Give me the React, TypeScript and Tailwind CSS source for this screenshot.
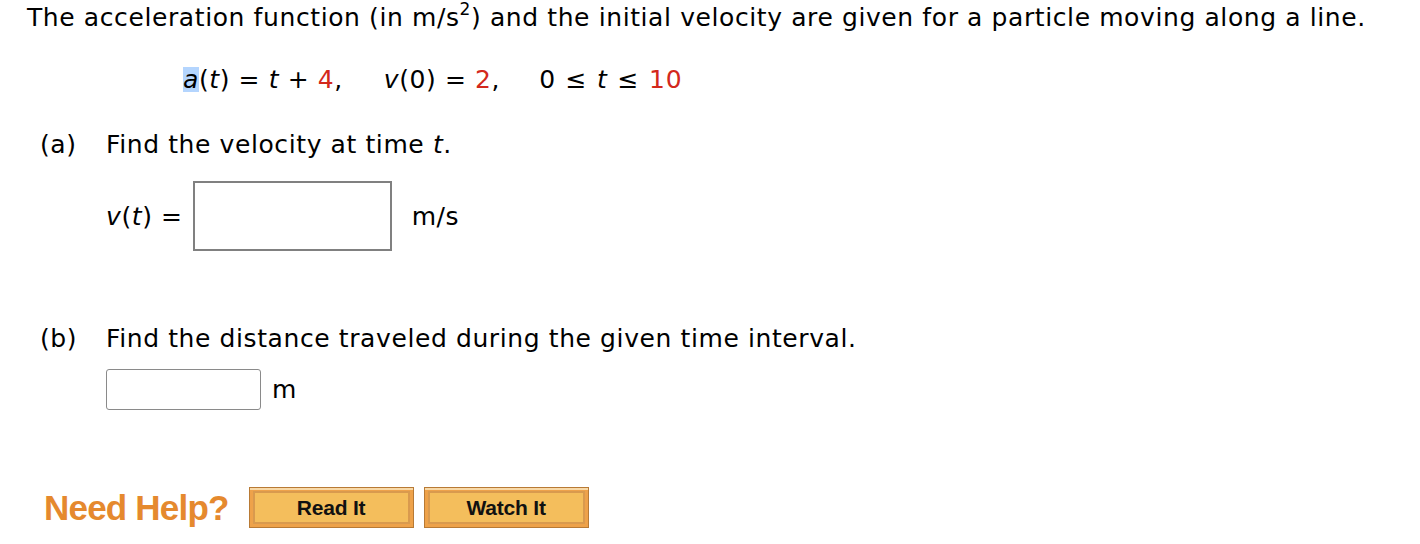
import React from 'react';

const font = { fontFamily: '"DejaVu Sans", Verdana, sans-serif' };

const HelpButton = ({ label }: { label: string }) => (
  <div className="w-[165px] h-[41px] border border-[#b87a35] bg-[#eea24a] p-[3px] shadow-[inset_0_2px_0_#f8d9a8]">
    <div className="h-full border-2 border-[#d99a4e] bg-[#f4be5c] flex items-center justify-center">
      <span className="text-[21px] font-bold text-[#111] tracking-[-0.2px] font-['Liberation_Sans',Arial,sans-serif]">
        {label}
      </span>
    </div>
  </div>
);

export default function App() {
  return (
    <div className="bg-white w-[1420px] h-[544px] text-black text-[25px] tracking-[0.6px] leading-none" style={font}>
      <div className="pl-[27px] pt-[5px]">
        The acceleration function (in m/s<sup className="text-[17px] relative top-[-11px]">2</sup>) and the initial velocity are given for a particle moving along a line.
      </div>

      <div className="pl-[183px] pt-[37px] flex items-baseline whitespace-pre">
        <span className="italic bg-[#b4d5fe]">a</span>
        <span>(</span><span className="italic">t</span><span>) = </span>
        <span className="italic">t</span><span> + </span>
        <span className="text-[#d3281c]">4</span><span>,</span>
        <span className="w-[41px]" />
        <span className="italic">v</span><span>(0) = </span>
        <span className="text-[#d3281c]">2</span><span>,</span>
        <span className="w-[39px]" />
        <span className="tracking-[1.3px]">0 ≤ </span><span className="italic tracking-[1.3px]">t</span><span className="tracking-[1.3px]"> ≤ </span>
        <span className="text-[#d3281c] tracking-[1px]">10</span>
      </div>

      <div className="pl-[40px] pt-[40px] flex">
        <span className="w-[66px]">(a)</span>
        <span>Find the velocity at time <span className="italic">t</span>.</span>
      </div>

      <div className="pl-[106px] pt-[24px] flex items-center">
        <span><span className="italic">v</span>(<span className="italic">t</span>) =</span>
        <div className="ml-[10px] w-[199px] h-[70px] border-2 border-[#808080] bg-white" />
        <span className="ml-[20px]">m/s</span>
      </div>

      <div className="pl-[40px] pt-[75px] flex">
        <span className="w-[66px]">(b)</span>
        <span>Find the distance traveled during the given time interval.</span>
      </div>

      <div className="pl-[106px] pt-[18px] flex items-center">
        <div className="w-[155px] h-[41px] border border-[#8a8a8a] rounded-[3px] bg-white" />
        <span className="ml-[11px]">m</span>
      </div>

      <div className="pl-[44px] pt-[77px] flex items-center">
        <span className="text-[35px] font-bold text-[#e5892e] font-['Liberation_Sans',Arial,sans-serif] tracking-[-0.8px]">
          Need Help?
        </span>
        <div className="ml-[20px] flex gap-[10px]">
          <HelpButton label="Read It" />
          <HelpButton label="Watch It" />
        </div>
      </div>
    </div>
  );
}
